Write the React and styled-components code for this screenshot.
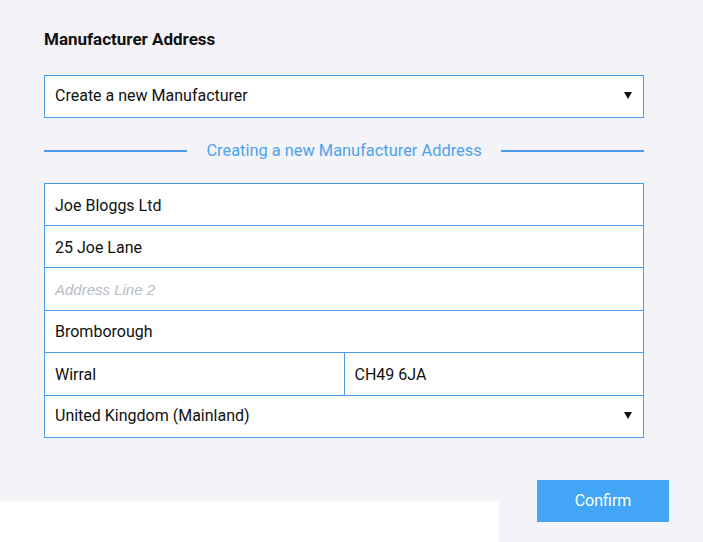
import styled, { createGlobalStyle } from "styled-components";

const GlobalStyle = createGlobalStyle`
  html, body {
    margin: 0;
    padding: 0;
    background: #f4f4f8;
    font-family: Roboto, "Liberation Sans", sans-serif;
  }
  * {
    box-sizing: border-box;
  }
`;

const Page = styled.div`
  width: 703px;
  height: 542px;
  overflow: hidden;
  display: flex;
  flex-direction: column;
`;

const FormColumn = styled.div`
  display: flex;
  flex-direction: column;
  width: 600px;
  margin-left: 44px;
  padding-top: 29px;
`;

const Heading = styled.div`
  font-size: 17px;
  font-weight: bold;
  color: #111;
  line-height: 20px;
  margin-bottom: 26px;
`;

const SelectBox = styled.div`
  display: flex;
  align-items: center;
  justify-content: space-between;
  height: ${(p) => p.$height || 43}px;
  padding: 0 10px 2px;
  background: #fff;
  border: ${(p) => (p.$flush ? "none" : "1px solid #4a9be8")};
  border-top: 1px solid #4a9be8;
  font-size: 16px;
  color: #111;
`;

const Arrow = styled.span`
  width: 0;
  height: 0;
  border-left: 4px solid transparent;
  border-right: 4px solid transparent;
  border-top: 7px solid #111;
  margin-right: 1px;
`;

const Divider = styled.div`
  display: flex;
  align-items: center;
  gap: 19px;
  height: 65px;
  color: #4ba3f0;
  font-size: 16.4px;
`;

const Line = styled.div`
  flex: 1;
  height: 2px;
  background: #4a9be8;
`;

const FieldGroup = styled.div`
  display: flex;
  flex-direction: column;
  border: 1px solid #4a9be8;
  background: #fff;
`;

const Row = styled.div`
  display: flex;
  height: ${(p) => (p.$first ? 41 : 42.4)}px;
  border-top: ${(p) => (p.$first ? "none" : "1px solid #4a9be8")};
`;

const Field = styled.input`
  flex: 1;
  min-width: 0;
  height: 100%;
  border: none;
  border-left: ${(p) => (p.$split ? "1px solid #4a9be8" : "none")};
  outline: none;
  padding: 1px 10px 0;
  font-family: Roboto, "Liberation Sans", sans-serif;
  font-size: 16px;
  color: #111;
  background: #fff;

  &::placeholder {
    font-family: "Liberation Sans", Arial, sans-serif;
    font-style: italic;
    font-size: 15px;
    color: #b4bcc8;
  }
`;

const Footer = styled.div`
  display: flex;
  justify-content: space-between;
  align-items: flex-start;
  margin-top: 42px;
  padding-right: 34px;
  flex: 1;
`;

const WhitePanel = styled.div`
  width: 499px;
  height: 100%;
  margin-top: 21px;
  background: #fff;
`;

const ConfirmButton = styled.button`
  width: 132px;
  height: 42px;
  border: none;
  background: #42a5f5;
  color: #fff;
  font-family: Roboto, "Liberation Sans", sans-serif;
  font-size: 16px;
  cursor: pointer;
`;

export default function App() {
  return (
    <Page>
      <GlobalStyle />
      <FormColumn>
        <Heading>Manufacturer Address</Heading>
        <SelectBox>
          <span>Create a new Manufacturer</span>
          <Arrow />
        </SelectBox>
        <Divider>
          <Line />
          <span>Creating a new Manufacturer Address</span>
          <Line />
        </Divider>
        <FieldGroup>
          <Row $first>
            <Field defaultValue="Joe Bloggs Ltd" />
          </Row>
          <Row>
            <Field defaultValue="25 Joe Lane" />
          </Row>
          <Row>
            <Field placeholder="Address Line 2" />
          </Row>
          <Row>
            <Field defaultValue="Bromborough" />
          </Row>
          <Row>
            <Field defaultValue="Wirral" />
            <Field $split defaultValue="CH49 6JA" />
          </Row>
          <SelectBox $flush $height={42.4}>
            <span>United Kingdom (Mainland)</span>
            <Arrow />
          </SelectBox>
        </FieldGroup>
      </FormColumn>
      <Footer>
        <WhitePanel />
        <ConfirmButton>Confirm</ConfirmButton>
      </Footer>
    </Page>
  );
}
